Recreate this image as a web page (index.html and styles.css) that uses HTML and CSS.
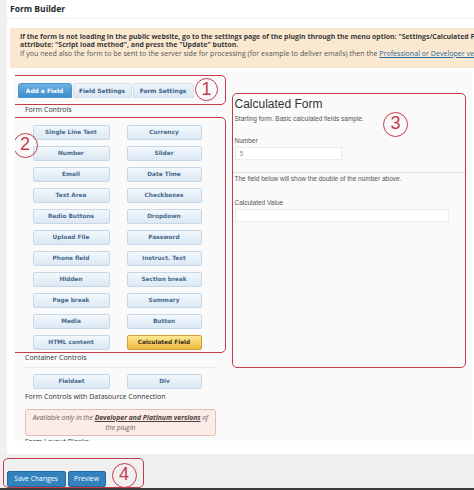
FILE: index.html
```html
<!DOCTYPE html>
<html lang="en">
<head>
    <meta charset="UTF-8">
    <meta name="viewport" content="width=device-width, initial-scale=1.0">
    <title>Form Builder</title>
    <link rel="stylesheet" href="styles.css">
</head>
<body>
    <div class="page">
        <div class="postbox">
            <h2 class="hndle">Form Builder</h2>

            <div class="notice">
                <p class="strong">If the form is not loading in the public website, go to the settings page of the plugin through the menu option: "Settings/Calculated Fields Form" and change the value of the</p>
                <p class="strong">attribute: "Script load method", and press the "Update" button.</p>
                <p>If you need also the form to be sent to the server side for processing (for example to deliver emails) then the <a href="#">Professional or Developer versions</a> of the plugin are required.</p>
            </div>

            <div class="builder">
                <!-- columna izquierda: controles -->
                <div class="left-col">
                    <div class="annot tabs-box">
                        <div class="tabs">
                            <span class="tab active">Add a Field</span>
                            <span class="tab">Field Settings</span>
                            <span class="tab">Form Settings</span>
                        </div>
                        <span class="num num-1">1</span>
                    </div>

                    <div class="section-title">Form Controls</div>

                    <div class="annot controls-box">
                        <span class="num num-2">2</span>
                        <div class="controls">
                            <span class="ctrl">Single Line Text</span>
                            <span class="ctrl">Currency</span>
                            <span class="ctrl">Number</span>
                            <span class="ctrl">Slider</span>
                            <span class="ctrl">Email</span>
                            <span class="ctrl">Date Time</span>
                            <span class="ctrl">Text Area</span>
                            <span class="ctrl">Checkboxes</span>
                            <span class="ctrl">Radio Buttons</span>
                            <span class="ctrl">Dropdown</span>
                            <span class="ctrl">Upload File</span>
                            <span class="ctrl">Password</span>
                            <span class="ctrl">Phone field</span>
                            <span class="ctrl">Instruct. Text</span>
                            <span class="ctrl">Hidden</span>
                            <span class="ctrl">Section break</span>
                            <span class="ctrl">Page break</span>
                            <span class="ctrl">Summary</span>
                            <span class="ctrl">Media</span>
                            <span class="ctrl">Button</span>
                            <span class="ctrl">HTML content</span>
                            <span class="ctrl calc">Calculated Field</span>
                        </div>
                    </div>

                    <div class="section-title">Container Controls</div>
                    <div class="sep"></div>
                    <div class="controls container-controls">
                        <span class="ctrl">Fieldset</span>
                        <span class="ctrl">Div</span>
                    </div>

                    <div class="section-title ds-title">Form Controls with Datasource Connection</div>
                    <div class="pro-box">
                        Available only in the <a href="#">Developer and Platinum versions</a> of<br>the plugin
                    </div>
                    <div class="section-title">Form Layout Blocks</div>
                </div>

                <!-- columna derecha: vista previa -->
                <div class="right-col">
                    <div class="annot preview-box">
                        <span class="num num-3">3</span>
                        <h1 class="form-title">Calculated Form</h1>
                        <p class="form-desc">Starting form. Basic calculated fields sample.</p>
                        <label class="field-label">Number</label>
                        <div class="field-input short">5</div>
                        <div class="form-sep"></div>
                        <p class="form-desc">The field below will show the double of the number above.</p>
                        <label class="field-label second">Calculated Value</label>
                        <div class="field-input long"></div>
                    </div>
                </div>
            </div>
        </div>

        <div class="footer-bar">
            <div class="annot actions-box">
                <span class="btn-primary save">Save Changes</span>
                <span class="btn-primary preview">Preview</span>
                <span class="num num-4">4</span>
            </div>
        </div>
        <div class="dark-bar"></div>
    </div>
</body>
</html>
```

FILE: styles.css
```css
* {
    margin: 0;
    padding: 0;
    box-sizing: border-box;
}

body {
    font-family: 'Open Sans', 'Liberation Sans', sans-serif;
    color: #444;
    background: #f1f1f1;
    overflow: hidden;
}

.page {
    width: 474px;
    height: 490px;
    overflow: hidden;
    background: #f1f1f1;
}

.postbox {
    margin-left: 7px;
    height: 454px;
    background: #fff;
    overflow: hidden;
}

.hndle {
    font-size: 8.5px;
    font-weight: bold;
    color: #23282d;
    line-height: 10px;
    padding: 4px 3px;
    height: 19px;
    border-bottom: 1px solid #f0f0f0;
}

/* aviso */
.notice {
    margin: 9px 0 0 3px;
    height: 40px;
    padding: 5px 10px;
    background: #fae9d0;
    overflow: hidden;
}

.notice p {
    font-size: 7.1px;
    line-height: 8px;
    white-space: nowrap;
    color: #555;
}

.notice .strong {
    font-size: 6.9px;
    font-weight: bold;
    color: #3a3a3a;
}

.notice a {
    color: #2a6a9e;
}

/* builder */
.builder {
    display: flex;
    margin: 4px 0 0 8px;
    width: 457px;
    height: 369px;
    background: #fafafa;
}

.left-col {
    width: 211px;
    padding-top: 3px;
    overflow: hidden;
    flex-shrink: 0;
}

.annot {
    position: relative;
    border: 1.5px solid #c53a4a;
    border-radius: 5px;
}

.num {
    position: absolute;
    width: 24px;
    height: 24px;
    border: 1.5px solid #c53a4a;
    border-radius: 50%;
    color: #c53a4a;
    font-family: 'Liberation Sans', sans-serif;
    font-size: 18px;
    line-height: 21px;
    text-align: center;
}

.tabs-box {
    margin-left: -7px;
    width: 218px;
    height: 30px;
    padding: 6.5px 0 0 8.5px;
}

.num-1 {
    left: 186px;
    top: 2px;
    width: 23px;
    height: 23px;
    line-height: 20px;
}

.tabs {
    display: flex;
    gap: 1px;
}

.tab {
    display: block;
    width: 59px;
    height: 15px;
    line-height: 14px;
    text-align: center;
    font-family: 'DejaVu Sans', sans-serif;
    font-size: 5.9px;
    font-weight: bold;
    color: #3b6186;
    background: linear-gradient(#eef5fb, #dce8f3);
    border: 1px solid #d2e0ec;
    border-radius: 3px 3px 0 0;
    white-space: nowrap;
}

.tab.active {
    width: 54px;
    color: #fff;
    background: linear-gradient(#6cb1e2, #3f8dcc);
    border-color: #4a95d0;
}

.tab:last-child {
    width: 61px;
}

.section-title {
    margin: 1px 0 0 10px;
    font-size: 7px;
    line-height: 8px;
    color: #333;
    white-space: nowrap;
}

.controls-box {
    margin: 3px 0 0 -7px;
    width: 218px;
    height: 236px;
    padding: 6.5px 0 0 23.5px;
}

.num-2 {
    left: 3.5px;
    top: 15px;
    width: 25px;
    height: 25px;
}

.controls {
    display: grid;
    grid-template-columns: 77px 75px;
    column-gap: 17px;
    row-gap: 6px;
    grid-auto-rows: 15px;
}

.ctrl {
    display: block;
    text-align: center;
    line-height: 13px;
    font-family: 'DejaVu Sans', sans-serif;
    font-size: 5.8px;
    font-weight: bold;
    color: #47698c;
    background: linear-gradient(#f2f8fc, #dbe8f4);
    border: 1px solid #c7d7e6;
    border-radius: 2px;
    white-space: nowrap;
}

.ctrl.calc {
    color: #3a2f22;
    background: linear-gradient(#fde994, #efb93e);
    border-color: #d39f38;
}

.sep {
    margin: 5px 0 0 10px;
    width: 190px;
    height: 1px;
    background: #e8e8e8;
}

.container-controls {
    margin: 6px 0 0 18px;
}

.ds-title {
    margin-top: 4px;
}

.pro-box {
    margin: 8px 0 0 10px;
    width: 191px;
    height: 27px;
    padding-top: 3px;
    font-size: 6.8px;
    line-height: 9.5px;
    font-style: italic;
    text-align: center;
    color: #6a5c58;
    background: #fcece8;
    border: 1px solid #e4bcb2;
    border-radius: 3px;
    white-space: nowrap;
}

.pro-box a {
    color: #4a403c;
    font-weight: bold;
}

.pro-box + .section-title {
    margin-top: 2px;
}

/* vista previa */
.right-col {
    flex: 1;
    margin-left: 3px;
}

.preview-box {
    margin: 21px 0 0 3px;
    width: 234px;
    height: 275px;
    padding: 2.5px 0 0 1.5px;
    font-family: 'Liberation Sans', sans-serif;
}

.num-3 {
    left: 150px;
    top: 18px;
    width: 25px;
    height: 25px;
}

.form-title {
    font-size: 12px;
    font-weight: normal;
    line-height: 14px;
    color: #333;
}

.form-desc {
    margin-top: 4px;
    font-size: 6.5px;
    line-height: 8px;
    color: #555;
    white-space: nowrap;
}

.field-label {
    display: block;
    margin-top: 14px;
    font-size: 6.5px;
    line-height: 8px;
    color: #555;
}

.field-label.second {
    margin-top: 16px;
}

.field-input {
    margin-top: 2px;
    height: 13px;
    padding-left: 4px;
    font-size: 7px;
    line-height: 11px;
    color: #999;
    background: #fff;
    border: 1px solid #ececec;
}

.field-input.short {
    width: 107px;
}

.field-input.long {
    width: 214px;
}

.form-sep {
    margin: 12px 0 0 -1.5px;
    height: 1px;
    background: #dcdcdc;
}

.form-sep + .form-desc {
    margin-top: 2px;
}

/* pie */
.footer-bar {
    height: 34px;
    padding: 4px 0 0 3px;
    background: #f0f0f0;
}

.actions-box {
    width: 141px;
    height: 30px;
    padding: 11.5px 0 0 2.5px;
    display: flex;
    gap: 2px;
}

.btn-primary {
    display: block;
    height: 16px;
    line-height: 14px;
    text-align: center;
    font-size: 6.8px;
    color: #fff;
    background: #3182bd;
    border: 1px solid #24699d;
    border-radius: 2px;
    white-space: nowrap;
}

.btn-primary.save {
    width: 59px;
}

.btn-primary.preview {
    width: 38px;
}

.num-4 {
    left: 107.5px;
    top: 3.5px;
    width: 25px;
    height: 25px;
}

.dark-bar {
    height: 2px;
    background: #3c3c3c;
}
```
